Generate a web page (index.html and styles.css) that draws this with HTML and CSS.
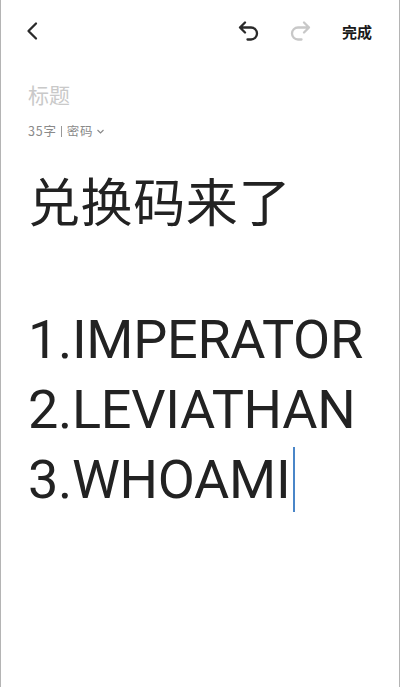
FILE: index.html
```html
<!DOCTYPE html>
<html lang="zh">
<head>
<meta charset="utf-8">
<link rel="stylesheet" href="styles.css">
</head>
<body>
<div class="screen">
  <div class="topbar">
    <svg class="back" width="24" height="24" viewBox="0 0 24 24"><polyline points="15,4.5 7.5,12 15,19.5" fill="none" stroke="#2a2a2a" stroke-width="2.3" stroke-linecap="round" stroke-linejoin="round"/></svg>
    <div class="spacer"></div>
    <svg class="icon" width="26" height="26" viewBox="0 0 26 26"><path d="M9 4.5 L4 9.5 L9 14.5 M4 9.5 H15 a6 6 0 0 1 0 12 H11.5" fill="none" stroke="#2a2a2a" stroke-width="2.3" stroke-linecap="round" stroke-linejoin="round"/></svg>
    <svg class="icon redo" width="26" height="26" viewBox="0 0 26 26"><path d="M17 4.5 L22 9.5 L17 14.5 M22 9.5 H11 a6 6 0 0 0 0 12 H14.5" fill="none" stroke="#c8c8c8" stroke-width="2.3" stroke-linecap="round" stroke-linejoin="round"/></svg>
    <span class="done">完成</span>
  </div>
  <div class="title">标题</div>
  <div class="meta"><span>35字</span><span class="sep"></span><span>密码</span><svg class="caret" width="9" height="9" viewBox="0 0 9 9"><polyline points="1.5,3 4.5,6 7.5,3" fill="none" stroke="#888" stroke-width="1.1"/></svg></div>
  <div class="body">
    <div class="line cjk">兑换码来了</div>
    <div class="line blank">&nbsp;</div>
    <div class="line">1.IMPERATOR</div>
    <div class="line">2.LEVIATHAN</div>
    <div class="line">3.WHOAMI<span class="cursor"></span></div>
  </div>
</div>
</body>
</html>
```
FILE: styles.css
```css
html, body {
  margin: 0;
  padding: 0;
  background: #ffffff;
}
.screen {
  box-sizing: border-box;
  width: 400px;
  height: 687px;
  border-left: 1.5px solid #b4b4b4;
  border-right: 1.5px solid #b4b4b4;
  font-family: Roboto, "Noto Sans CJK SC", sans-serif;
  color: #222222;
  overflow: hidden;
}
.topbar {
  display: flex;
  align-items: center;
  height: 62px;
  padding: 0 27px 0 20px;
}
.back {
  display: block;
}
.spacer {
  flex: 1;
}
.icon {
  display: block;
  margin-right: 25px;
}
.done {
  font-family: "Noto Sans CJK SC", sans-serif;
  font-size: 15px;
  font-weight: 700;
  color: #1a1a1a;
  margin-left: 4px;
}
.title {
  font-family: "Noto Sans CJK SC", sans-serif;
  font-size: 21px;
  line-height: 30px;
  color: #c9c9c9;
  padding-left: 27px;
  margin-top: 17px;
}
.meta {
  display: flex;
  align-items: center;
  font-family: "Noto Sans CJK SC", sans-serif;
  font-size: 12.5px;
  line-height: 16px;
  letter-spacing: 0.8px;
  color: #8a8a8a;
  padding-left: 27px;
  margin-top: 14px;
}
.sep {
  display: inline-block;
  width: 1px;
  height: 11px;
  background: #999;
  margin: 0 5px 0 4px;
}
.caret {
  margin-left: 3px;
}
.body {
  padding-left: 27px;
  margin-top: 26px;
}
.line {
  font-size: 54px;
  line-height: 70px;
  height: 70px;
  white-space: nowrap;
  letter-spacing: -0.3px;
  color: #222;
}
.cjk {
  font-family: "Noto Sans CJK SC", sans-serif;
  font-size: 52px;
  letter-spacing: 0.6px;
}
.cursor {
  display: inline-block;
  width: 2px;
  height: 65px;
  background: #4a86c8;
  vertical-align: -14px;
  margin-left: 3px;
}
```
